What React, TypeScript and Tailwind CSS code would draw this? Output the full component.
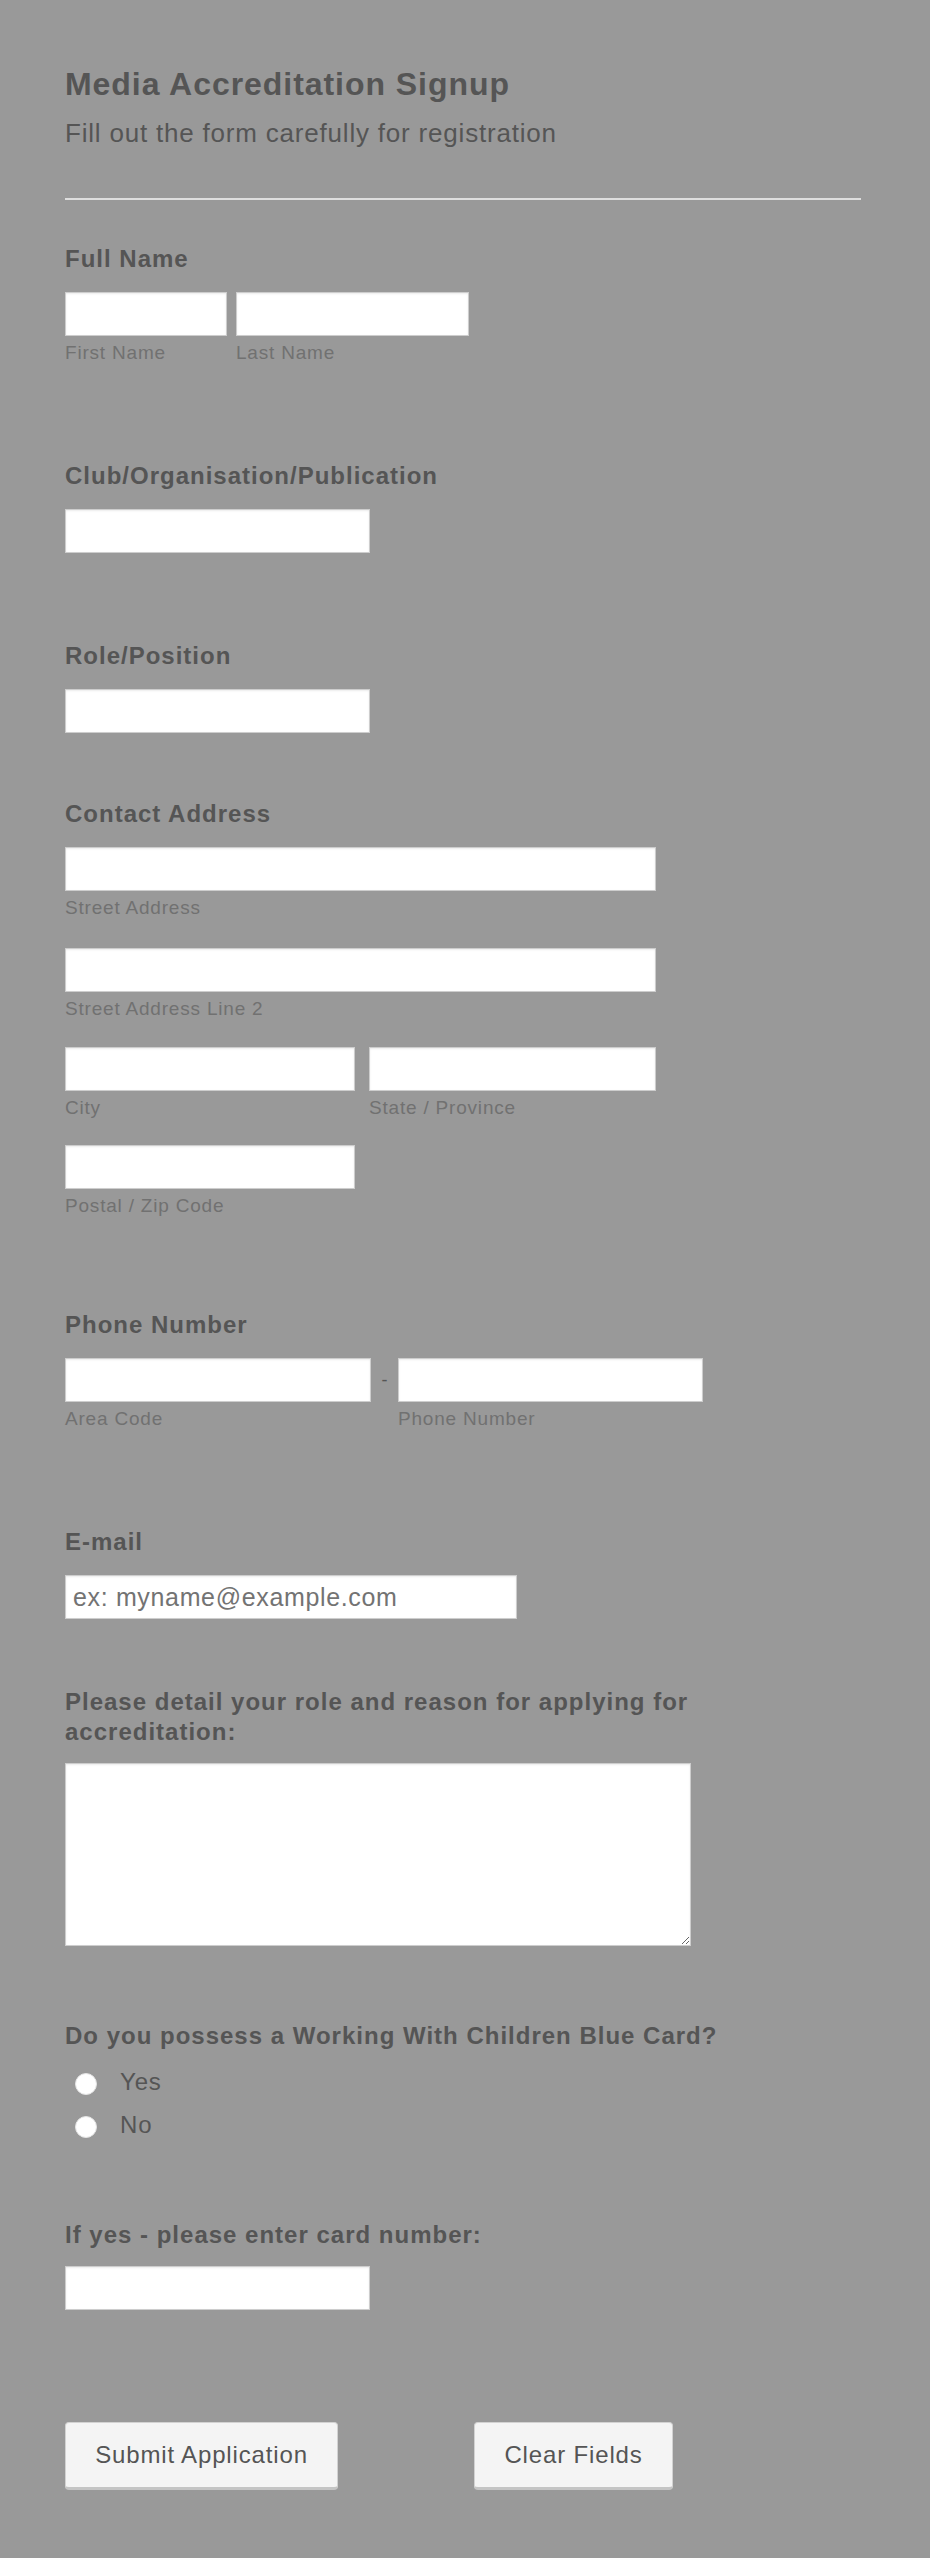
import React from "react";

const font = { fontFamily: '"Liberation Sans", Arial, Helvetica, sans-serif' };

const inputCls =
    "block h-[44px] bg-white border border-[#cdcdcd] shadow-[inset_0_1px_2px_rgba(0,0,0,0.08)] outline-none px-[7px]";

const Label: React.FC<{ children: React.ReactNode; className?: string }> = ({
    children,
    className = "leading-[28px] mb-[19px]",
}) => (
    <label className={`block text-[24px] font-bold tracking-[1px] text-[#555] ${className}`}>{children}</label>
);

const Sub: React.FC<{ children: React.ReactNode }> = ({ children }) => (
    <span className="block mt-[6px] text-[19px] leading-[22px] tracking-[0.8px] text-[#717171]">{children}</span>
);

const Radio: React.FC<{ label: string }> = ({ label }) => (
    <label className="flex items-start h-[43px]">
        <input
            type="radio"
            name="bluecard"
            className="appearance-none ml-[10px] mt-[5px] w-[22px] h-[22px] rounded-full bg-white border border-[#e4e4e4]"
        />
        <span className="ml-[23px] text-[24px] leading-[28px] tracking-[0.85px] text-[#555]">{label}</span>
    </label>
);

const btnCls =
    "h-[68px] bg-[#f4f4f4] border border-[#d2d2d2] border-b-[3px] border-b-[#c4c4c4] rounded-[4px] text-[24px] tracking-[0.85px] text-[#555]";

export default function App() {
    return (
        <div className="min-h-screen bg-[#999999] pl-[65px] pt-[66px] pb-[67px]" style={font}>
            <div className="w-[796px]">
                <h1 className="text-[32px] leading-[37px] font-bold tracking-[0.95px] text-[#555]">
                    Media Accreditation Signup
                </h1>
                <p className="mt-[15px] text-[26px] leading-[30px] tracking-[0.8px] text-[#555]">
                    Fill out the form carefully for registration
                </p>
                <div className="mt-[50px] h-[2px] bg-[#dedede]" />

                {/* Full name */}
                <div className="mt-[45px]">
                    <Label>Full Name</Label>
                    <div className="flex gap-[9px]">
                        <div>
                            <input className={`${inputCls} w-[162px]`} />
                            <Sub>First Name</Sub>
                        </div>
                        <div>
                            <input className={`${inputCls} w-[233px]`} />
                            <Sub>Last Name</Sub>
                        </div>
                    </div>
                </div>

                <div className="mt-[98px]">
                    <Label>Club/Organisation/Publication</Label>
                    <input className={`${inputCls} w-[305px]`} />
                </div>

                <div className="mt-[89px]">
                    <Label>Role/Position</Label>
                    <input className={`${inputCls} w-[305px]`} />
                </div>

                {/* Address */}
                <div className="mt-[67px]">
                    <Label>Contact Address</Label>
                    <input className={`${inputCls} w-[591px]`} />
                    <Sub>Street Address</Sub>
                    <input className={`${inputCls} w-[591px] mt-[29px]`} />
                    <Sub>Street Address Line 2</Sub>
                    <div className="flex gap-[14px] mt-[27px]">
                        <div>
                            <input className={`${inputCls} w-[290px]`} />
                            <Sub>City</Sub>
                        </div>
                        <div>
                            <input className={`${inputCls} w-[287px]`} />
                            <Sub>State / Province</Sub>
                        </div>
                    </div>
                    <input className={`${inputCls} w-[290px] mt-[26px]`} />
                    <Sub>Postal / Zip Code</Sub>
                </div>

                {/* Phone */}
                <div className="mt-[94px]">
                    <Label>Phone Number</Label>
                    <div className="flex items-start">
                        <div>
                            <input className={`${inputCls} w-[306px]`} />
                            <Sub>Area Code</Sub>
                        </div>
                        <span className="w-[27px] h-[44px] flex items-center justify-center text-[18px] text-[#555]">-</span>
                        <div>
                            <input className={`${inputCls} w-[305px]`} />
                            <Sub>Phone Number</Sub>
                        </div>
                    </div>
                </div>

                <div className="mt-[98px]">
                    <Label>E-mail</Label>
                    <input
                        className={`${inputCls} w-[452px] text-[25px] tracking-[0.65px] text-[#555] placeholder:text-[#737373]`}
                        placeholder="ex: myname@example.com"
                    />
                </div>

                <div className="mt-[68px]">
                    <Label className="max-w-[680px] leading-[30px] mb-[16px]">
                        Please detail your role and reason for applying for accreditation:
                    </Label>
                    <textarea className="block w-[626px] h-[183px] bg-white border border-[#cdcdcd] shadow-[inset_0_1px_2px_rgba(0,0,0,0.08)] outline-none" />
                </div>

                <div className="mt-[76px]">
                    <Label className="leading-[28px] mb-[18px]">Do you possess a Working With Children Blue Card?</Label>
                    <Radio label="Yes" />
                    <Radio label="No" />
                </div>

                <div className="mt-[67px]">
                    <Label className="leading-[28px] mb-[17px]">If yes - please enter card number:</Label>
                    <input className={`${inputCls} w-[305px]`} />
                </div>

                <div className="mt-[112px] flex gap-[136px]">
                    <button className={`${btnCls} w-[273px]`}>Submit Application</button>
                    <button className={`${btnCls} w-[199px]`}>Clear Fields</button>
                </div>
            </div>
        </div>
    );
}
